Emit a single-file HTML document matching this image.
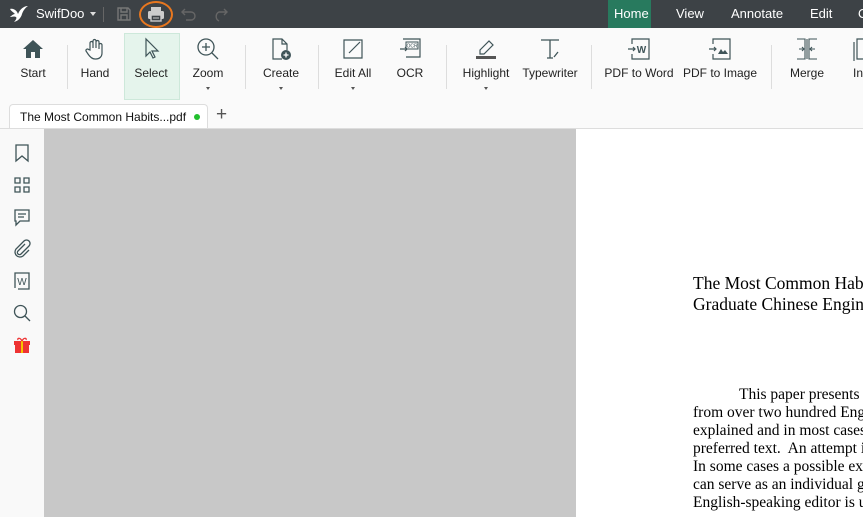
<!DOCTYPE html>
<html><head><meta charset="utf-8"><style>
*{margin:0;padding:0;box-sizing:border-box}
body{width:863px;height:517px;overflow:hidden;position:relative;font-family:"Liberation Sans",sans-serif;background:#fafafa}
.a{position:absolute}
.top{left:0;top:0;width:863px;height:28px;background:#3d4246}
.tt{color:#fff;font-size:13px;top:6px}
.tool{position:absolute;top:28px;width:863px;height:76px;background:#fafafa}
.it{position:absolute;top:0;height:76px;text-align:center;font-size:12px;color:#222;white-space:nowrap}
.it svg{position:absolute;top:9px;left:50%;margin-left:-12px}
.it span{position:absolute;top:38px;left:50%;transform:translateX(-50%)}
.dd{position:absolute;top:59px;left:50%;margin-left:-2px;border-left:2.5px solid transparent;border-right:2.5px solid transparent;border-top:3px solid #555}
.sep{position:absolute;top:17px;width:1px;height:44px;background:#ddd}
.side svg{position:absolute;left:12px}
.pg{font-family:"Liberation Serif",serif;color:#000;white-space:nowrap}
</style></head><body>
<div class="a top"></div>
<svg class="a" style="left:9px;top:5px" width="20" height="18" viewBox="0 0 20 18"><path d="M1 4 C5 3 8 6 9 9 C11 4 15 1 19 1 C16 3 14 6 13 9 C12 13 9 16 5 17 C7 15 8 13 7 12 C5 11 3 12 1 12 C3 10 5 9 6 9 C4 7 2 6 1 4Z" fill="#fff"/></svg>
<div class="a tt" style="left:36px;font-size:13px">SwifDoo</div>
<div class="a" style="left:90px;top:12px;border-left:3px solid transparent;border-right:3px solid transparent;border-top:4px solid #ddd"></div>
<div class="a" style="left:103px;top:7px;width:1px;height:15px;background:#666"></div>
<svg class="a" style="left:116px;top:6px" width="16" height="16" viewBox="0 0 16 16"><path d="M2 2h10l2 2v10H2z M5 2v4h6V2 M5 14v-5h6v5" fill="none" stroke="#777" stroke-width="1.4"/></svg>
<div class="a" style="left:139px;top:1px;width:34px;height:27px;border:2px solid #e8771f;border-radius:50%"></div>
<svg class="a" style="left:147px;top:6px" width="18" height="16" viewBox="0 0 18 16"><rect x="4" y="1" width="10" height="4" fill="#ccc"/><rect x="1" y="5" width="16" height="8" rx="1.5" fill="#ccc"/><rect x="4" y="9" width="10" height="6" fill="#3d4246" stroke="#ccc" stroke-width="1.4"/><path d="M6 12h6" stroke="#ccc"/></svg>
<svg class="a" style="left:180px;top:6px" width="18" height="16" viewBox="0 0 18 16"><path d="M5 3L2 6l3 3 M2 6h9a4 4 0 010 8H6" fill="none" stroke="#666" stroke-width="1.4"/></svg>
<svg class="a" style="left:211px;top:6px" width="18" height="16" viewBox="0 0 18 16"><path d="M13 3l3 3-3 3 M16 6H8a5 5 0 000 9" fill="none" stroke="#666" stroke-width="1.4"/></svg>
<div class="a" style="left:608px;top:0;width:43px;height:28px;background:#287a5e"></div>
<div class="a tt" style="left:614px">Home</div>
<div class="a tt" style="left:676px">View</div>
<div class="a tt" style="left:731px">Annotate</div>
<div class="a tt" style="left:810px">Edit</div>
<div class="a tt" style="left:858px">O</div>

<div class="tool">
<div class="a" style="left:124px;top:5px;width:56px;height:67px;background:#e5f4ec;border:1px solid #cde8da"></div>
<div class="it" style="left:13px;width:40px"><svg width="24" height="24" viewBox="0 0 24 24"><path d="M2 12L12 3l10 9h-3v9h-5v-6h-4v6H5v-9z" fill="#3f5458"/></svg><span>Start</span></div>
<div class="sep" style="left:67px"></div>
<div class="it" style="left:75px;width:40px"><svg width="24" height="24" viewBox="0 0 24 24"><path d="M7 13V6a1.5 1.5 0 013 0v5V4a1.5 1.5 0 013 0v7V5a1.5 1.5 0 013 0v7V8a1.5 1.5 0 013 0v8c0 4-3 6-6 6h-1c-3 0-5-2-7-5l-2-3a1.5 1.5 0 012.5-1.5z" fill="none" stroke="#3f5458" stroke-width="1.2"/></svg><span>Hand</span></div>
<div class="it" style="left:131px;width:40px"><svg width="24" height="24" viewBox="0 0 24 24"><path d="M7 2v17l4-4 3 6 2-1-3-6h6z" fill="none" stroke="#3f5458" stroke-width="1.2"/></svg><span>Select</span></div>
<div class="it" style="left:188px;width:40px"><svg width="24" height="24" viewBox="0 0 24 24"><circle cx="10" cy="10" r="8" fill="none" stroke="#3f5458" stroke-width="1.3"/><path d="M6 10h8M10 6v8M16 16l6 6" stroke="#3f5458" stroke-width="1.3"/></svg><span>Zoom</span><i class="dd"></i></div>
<div class="sep" style="left:245px"></div>
<div class="it" style="left:261px;width:40px"><svg width="24" height="24" viewBox="0 0 24 24"><path d="M13 22H4V2h9l5 5v6 M13 2v5h5" fill="none" stroke="#3f5458" stroke-width="1.2"/><circle cx="17" cy="18" r="5" fill="#3f5458"/><path d="M14.5 18h5M17 15.5v5" stroke="#fff" stroke-width="1.3"/></svg><span>Create</span><i class="dd"></i></div>
<div class="sep" style="left:318px"></div>
<div class="it" style="left:333px;width:40px"><svg width="24" height="24" viewBox="0 0 24 24"><path d="M3 3h18v18H3z M8 16L19 5" fill="none" stroke="#3f5458" stroke-width="1.2"/></svg><span>Edit All</span><i class="dd"></i></div>
<div class="it" style="left:390px;width:40px"><svg width="24" height="24" viewBox="0 0 24 24"><path d="M5 2h17v18H8 M2 12h7M7 10l2 2-2 2" fill="none" stroke="#3f5458" stroke-width="1.2"/><rect x="8" y="5" width="12" height="7" fill="none" stroke="#3f5458"/><text x="14" y="10.5" font-size="5" text-anchor="middle" fill="#3f5458" font-family="Liberation Sans">OCR</text></svg><span>OCR</span></div>
<div class="sep" style="left:446px"></div>
<div class="it" style="left:466px;width:40px"><svg width="24" height="24" viewBox="0 0 24 24"><path d="M6 13l9-9 4 4-9 9H6z" fill="none" stroke="#3f5458" stroke-width="1.2"/><rect x="2" y="19" width="20" height="3" fill="#555"/></svg><span>Highlight</span><i class="dd"></i></div>
<div class="it" style="left:530px;width:40px"><svg width="24" height="24" viewBox="0 0 24 24"><path d="M3 3h18M12 3v18M9 21h6M16 20l4-5" fill="none" stroke="#3f5458" stroke-width="1.3"/></svg><span>Typewriter</span></div>
<div class="sep" style="left:591px"></div>
<div class="it" style="left:619px;width:40px"><svg width="24" height="24" viewBox="0 0 24 24"><path d="M5 7V2h17v20H5v-5 M1 12h7M6 10l2 2-2 2" fill="none" stroke="#3f5458" stroke-width="1.2"/><text x="14.5" y="16" font-size="10" font-weight="bold" text-anchor="middle" fill="#3f5458" font-family="Liberation Sans">W</text></svg><span>PDF to Word</span></div>
<div class="it" style="left:700px;width:40px"><svg width="24" height="24" viewBox="0 0 24 24"><path d="M5 7V2h17v20H5v-5 M1 12h7M6 10l2 2-2 2" fill="none" stroke="#3f5458" stroke-width="1.2"/><path d="M10 17l3-5 2 3 2-2 3 4z" fill="#3f5458"/></svg><span>PDF to Image</span></div>
<div class="sep" style="left:771px"></div>
<div class="it" style="left:787px;width:40px"><svg width="24" height="24" viewBox="0 0 24 24"><path d="M2 2h8v20H2 M22 2h-8v20h8 M12 2v20 M4 12h5M7 10l2 2-2 2M20 12h-5M17 10l-2 2 2 2" fill="none" stroke="#3f5458" stroke-width="1.1"/></svg><span>Merge</span></div>
<div class="it" style="left:846px;width:30px"><svg width="24" height="24" viewBox="0 0 24 24"><path d="M8 2h14v20H8z M5 5v20" fill="none" stroke="#3f5458" stroke-width="1.2"/></svg><span>Ins</span></div>
</div>

<div class="a" style="left:9px;top:104px;width:199px;height:25px;background:#fff;border:1px solid #ddd;border-bottom:none;border-radius:4px 4px 0 0"></div>
<div class="a" style="left:20px;top:110px;font-size:12px;color:#111">The Most Common Habits...pdf</div>
<div class="a" style="left:194px;top:114px;width:6px;height:6px;border-radius:50%;background:#22c02e"></div>
<div class="a" style="left:216px;top:104px;font-size:19px;color:#555;font-weight:300">+</div>
<div class="a" style="left:0;top:128px;width:863px;height:1px;background:#ddd"></div>

<div class="a side" style="left:0;top:129px;width:44px;height:388px;background:#f9f9f9">
<svg style="top:14px" width="20" height="20" viewBox="0 0 20 20"><path d="M4 2h12v16l-6-5-6 5z" fill="none" stroke="#3f5458" stroke-width="1.3"/></svg>
<svg style="top:46px" width="20" height="20" viewBox="0 0 20 20"><path d="M3 3h5v5H3zM12 3h5v5h-5zM3 12h5v5H3zM12 12h5v5h-5z" fill="none" stroke="#3f5458" stroke-width="1.3"/></svg>
<svg style="top:78px" width="20" height="20" viewBox="0 0 20 20"><path d="M3 3h14v11H8l-4 4v-4H3z M6 7h8M6 10h6" fill="none" stroke="#3f5458" stroke-width="1.3"/></svg>
<svg style="top:110px" width="20" height="20" viewBox="0 0 20 20"><path d="M13 5l-7 7a2 2 0 003 3l8-8a3.5 3.5 0 00-5-5L4 10a5 5 0 007 7l6-6" fill="none" stroke="#3f5458" stroke-width="1.3"/></svg>
<svg style="top:142px" width="20" height="20" viewBox="0 0 20 20"><path d="M3 17V2h14v16H6" fill="none" stroke="#3f5458" stroke-width="1.3"/><text x="10" y="14" font-size="10" text-anchor="middle" fill="#3f5458" font-family="Liberation Sans">W</text></svg>
<svg style="top:174px" width="20" height="20" viewBox="0 0 20 20"><circle cx="8.5" cy="8.5" r="6" fill="none" stroke="#3f5458" stroke-width="1.3"/><path d="M13 13l5 5" stroke="#3f5458" stroke-width="1.3"/></svg>
<svg style="top:206px" width="20" height="20" viewBox="0 0 20 20"><rect x="2" y="6" width="16" height="4" fill="#e33"/><rect x="3" y="10" width="14" height="8" fill="#e33"/><rect x="9" y="6" width="2" height="12" fill="#f5c400"/><path d="M10 6C8 2 5 3 6 5M10 6c2-4 5-3 4-1" fill="none" stroke="#e33" stroke-width="1.3"/></svg>
</div>
<div class="a" style="left:44px;top:129px;width:532px;height:388px;background:#c8c8c8"></div>
<div class="a" style="left:576px;top:129px;width:287px;height:388px;background:#fff"></div>
<div class="a pg" style="left:693px;top:273px;font-size:17.5px;line-height:21px">The Most Common Habits<br>Graduate Chinese Engineers</div>
<div class="a pg" style="left:693px;top:386px;font-size:15.5px;line-height:18px"><span style="padding-left:46px">This paper presents</span><br>from over two hundred English<br>explained and in most cases<br>preferred text.&nbsp; An attempt is<br>In some cases a possible expl<br>can serve as an individual gu<br>English-speaking editor is us</div>
</body></html>
